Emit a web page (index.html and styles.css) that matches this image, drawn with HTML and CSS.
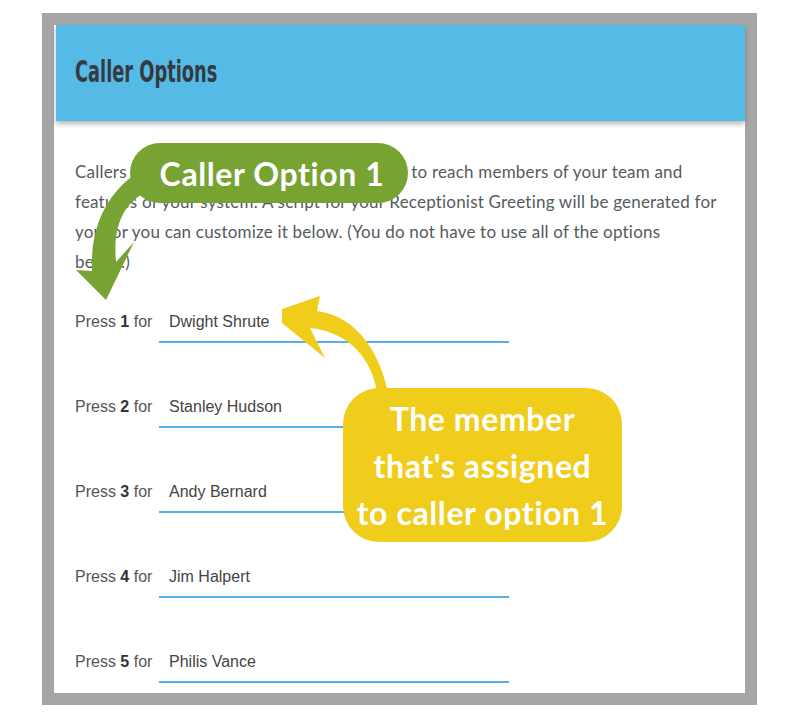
FILE: index.html
```html
<!DOCTYPE html>
<html>
<head>
<meta charset="utf-8">
<link rel="stylesheet" href="styles.css">
</head>
<body>
<div class="frame">
  <div class="card-head"><h1 class="title">Caller Options</h1></div>
  <div class="content">
    <p class="intro">Callers can dial the numbers on their phone to reach members of your team and<br>features of your system. A script for your Receptionist Greeting will be generated for<br>you, or you can customize it below. (You do not have to use all of the options<br>below.)</p>
    <div class="rows">
      <div class="row"><div class="label">Press <b>1</b> for</div><div class="field">Dwight Shrute</div></div>
      <div class="row"><div class="label">Press <b>2</b> for</div><div class="field">Stanley Hudson</div></div>
      <div class="row"><div class="label">Press <b>3</b> for</div><div class="field">Andy Bernard</div></div>
      <div class="row"><div class="label">Press <b>4</b> for</div><div class="field">Jim Halpert</div></div>
      <div class="row"><div class="label">Press <b>5</b> for</div><div class="field">Philis Vance</div></div>
    </div>
  </div>
</div>

<svg class="arrows" width="800" height="720" viewBox="0 0 800 720">
  <path class="green" d="M134,175 C108,194 90,225 92,271 L76,270 L106,300 L134,242 L116,262 C113,230 121,206 144,193 Z"/>
  <path class="yellow" d="M282,309 L320,296 L317,311 C345,315 375,335 388,392 L377,392 C372,360 350,332 310,328 L325,358 L282,323 Z"/>
</svg>

<div class="bubble bubble-green">Caller Option 1</div>
<div class="bubble bubble-yellow">The member<br>that's assigned<br>to caller option 1</div>
</body>
</html>
```

FILE: styles.css
```css
html, body {
  margin: 0;
  padding: 0;
  background: #ffffff;
}

body {
  width: 800px;
  height: 720px;
  position: relative;
  overflow: hidden;
  font-family: "Liberation Sans", Arial, sans-serif;
}

.frame {
  box-sizing: border-box;
  margin: 13px 0 0 42px;
  width: 715px;
  height: 692px;
  border: 12px solid #a6a6a6;
  background: #ffffff;
}

.card-head {
  margin-left: 2px;
  height: 96px;
  background: #56bae6;
  box-shadow: 0 3px 5px rgba(0, 0, 0, 0.28);
  display: flex;
  align-items: center;
  padding-left: 19px;
}

.title {
  margin: 0;
  font-family: "DejaVu Sans Condensed", sans-serif;
  font-weight: 700;
  font-size: 30px;
  color: #343a3f;
  transform: scaleX(0.66);
  transform-origin: left center;
  white-space: nowrap;
  position: relative;
  top: -2px;
}

.content {
  padding: 36px 21px 0 21px;
}

.intro {
  margin: 0;
  font-family: Lato, "Open Sans", sans-serif;
  font-size: 17px;
  letter-spacing: 0.2px;
  line-height: 30px;
  color: #555a5e;
  white-space: nowrap;
}

.rows {
  margin-top: 35px;
  display: flex;
  flex-direction: column;
  gap: 54px;
}

.row {
  display: flex;
  align-items: flex-start;
}

.label {
  width: 84px;
  font-size: 16px;
  line-height: 20px;
  color: #555;
  white-space: nowrap;
}

.label b {
  color: #333;
}

.field {
  width: 350px;
  box-sizing: border-box;
  padding: 0 10px 9px;
  border-bottom: 2px solid #5aaee8;
  font-size: 16px;
  line-height: 20px;
  color: #444;
}

.arrows {
  position: absolute;
  left: 0;
  top: 0;
  pointer-events: none;
}

.green { fill: #77a333; }
.yellow { fill: #f0cd1b; }

.bubble {
  position: absolute;
  box-sizing: border-box;
  display: flex;
  align-items: center;
  justify-content: center;
  text-align: center;
  font-family: Lato, "Open Sans", sans-serif;
  font-weight: 700;
  color: #ffffff;
  letter-spacing: 0.6px;
  white-space: nowrap;
}

.bubble-green {
  left: 130px;
  top: 143px;
  width: 278px;
  height: 60px;
  padding-left: 6px;
  border-radius: 30px;
  background: #77a333;
  font-size: 32px;
}

.bubble-yellow {
  left: 343px;
  top: 388px;
  width: 279px;
  height: 154px;
  border-radius: 36px;
  background: #f0cd1b;
  font-size: 32px;
  line-height: 47px;
}
```
